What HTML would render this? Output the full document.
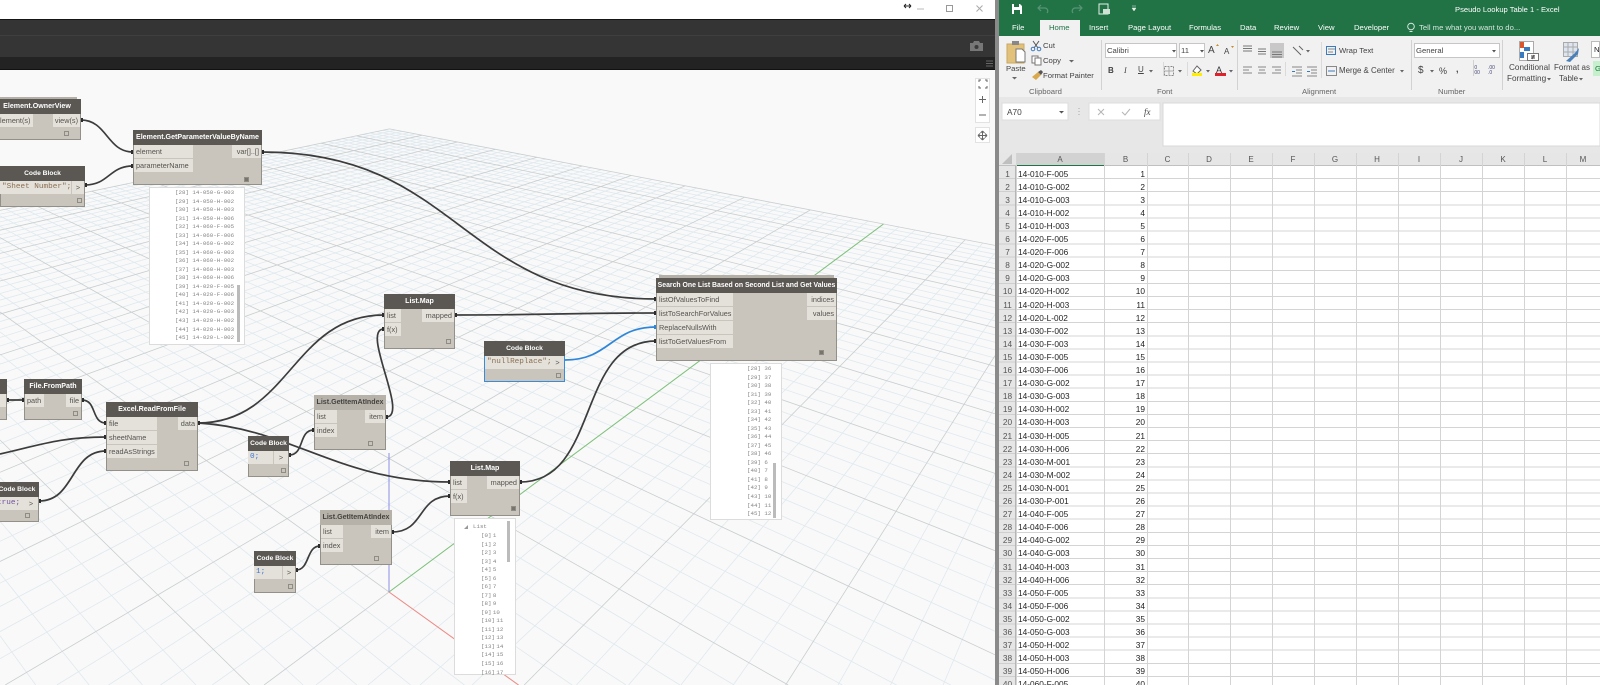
<!DOCTYPE html>
<html>
<head>
<meta charset="utf-8">
<style>
html,body{margin:0;padding:0;width:1600px;height:685px;overflow:hidden;background:#fff}
#root{position:absolute;left:0;top:0;width:1600px;height:685px;overflow:hidden;font-family:"Liberation Sans",sans-serif;filter:blur(.38px)}
.a{position:absolute}
.t{position:absolute;white-space:nowrap;line-height:1}
svg{position:absolute;left:0;top:0;overflow:hidden}
.n{position:absolute;background:#c9c5bd;outline:1px solid #93908a;outline-offset:-1px;font-size:7.3px;color:#55534f}
.h{position:absolute;left:0;right:0;top:0;height:15px;background:#5b5753;color:#fff;font-weight:bold;font-size:7.1px;line-height:15px;text-align:center;white-space:nowrap;overflow:hidden}
.h.lt{background:#b6b2aa;color:#45433f}
.h.cb{font-size:6.7px}
.l,.r{position:absolute;height:13px;line-height:13px;background:#e4e1da;white-space:nowrap}
.l{left:1px;padding-left:2px;box-sizing:border-box}
.r{right:1px;padding-right:2px;box-sizing:border-box;text-align:right}
.c{font-family:"Liberation Mono",monospace;font-size:7.7px;overflow:hidden}
.m{position:absolute;width:5px;height:5px;border:1px solid #8f8c85;box-sizing:border-box}
.m.f{background:#77746e}
.p{position:absolute;background:#fff;border:1px solid #dcdcdc;box-sizing:border-box}
pre{position:absolute;margin:0;font-family:"Liberation Mono",monospace;font-size:5.8px;line-height:8.53px;color:#868686}
.sb{position:absolute;background:#bbb;width:3px}
.xl{color:#444;font-size:7.7px}
.tab{color:#fff;font-size:7.7px;top:24px}
.rw{position:absolute;left:0;width:148px;height:13.1px;line-height:13.1px;font-size:8.3px;color:#222;overflow:hidden}
.rw i{position:absolute;left:0;top:1.5px;width:17px;text-align:center;font-style:normal;color:#555}
.rw b{position:absolute;left:19px;top:1.5px;font-weight:normal}
.rw u{position:absolute;left:105px;top:1.5px;width:43px;padding-right:2px;box-sizing:border-box;text-align:right;text-decoration:none}
.v{position:absolute;top:153px;width:1px;height:532px;background:#d4d4d4}
.ch{position:absolute;top:153px;height:13px;line-height:13px;font-size:8px;color:#555;text-align:center}
</style>
</head>
<body>
<div id="root">

<!-- Dynamo -->
<div class="a" style="left:0;top:0;width:995px;height:19px;background:#fff"></div>
<div class="a" style="left:0;top:19px;width:995px;height:1px;background:#151515"></div>
<div class="a" style="left:0;top:20px;width:995px;height:15px;background:#343434"></div>
<div class="a" style="left:0;top:35px;width:995px;height:1px;background:#3f3f3f"></div>
<div class="a" style="left:0;top:36px;width:995px;height:21px;background:#353535"></div>
<div class="a" style="left:0;top:57px;width:995px;height:12px;background:#232323"></div>
<div class="a" style="left:0;top:69px;width:995px;height:1px;background:#111"></div>
<div class="a" style="left:0;top:70px;width:995px;height:615px;background:#f9f9f9;overflow:hidden">
  <svg id="grid" width="995" height="615" viewBox="0 70 995 615" style="top:0;left:0"></svg>
</div>

<!-- window controls -->
<svg width="1600" height="685">
  <path d="M904 6H911M904 6l2-2M904 6l2 2M911 6l-2-2M911 6l-2 2" stroke="#222" stroke-width="1" fill="none"/>
  <path d="M917 9H924" stroke="#bbb" stroke-width="1"/>
  <rect x="946.500" y="5.500" width="6" height="6" fill="none" stroke="#999"/>
  <path d="M976.500 5.500l6 6M982.500 5.500l-6 6" stroke="#aaa" fill="none"/>
  <path d="M970 43h3l1-2h5l1 2h3v8h-13z" fill="#777"/>
  <circle cx="976.500" cy="47" r="2" fill="#3a3a3a"/>
  <path d="M986 61h7M986 63.500h7M986 66h7" stroke="#666" stroke-width="1"/>
  <!-- axes -->
  <path d="M389 453V592" stroke="#8d8de8" stroke-width="1"/>
  <path d="M389 592L883.500 224" stroke="#7ec27a" stroke-width="1" fill="none"/>
  <path d="M389 592L518.600 685" stroke="#f08a85" stroke-width="1" fill="none"/>
  <!-- wires -->
  <g fill="none" stroke="#3c3c3c" stroke-width="1.700">
    <path d="M81 120C107 120 107 152 133 152"/>
    <path d="M85 185C109 185 109 166 133 166"/>
    <path d="M262 152C460 152 460 299 656 299"/>
    <path d="M455 315C555 315 555 313 656 313"/>
    <path d="M520 482C600 482 576 341 656 341"/>
    <path d="M198 423C290 423 292 315 384 315"/>
    <path d="M198 423C290 428 340 482 450 482"/>
    <path d="M386 417C410 417 360 329 384 329"/>
    <path d="M289 455C305 455 298 430 314 430"/>
    <path d="M296 570C310 570 306 546 320 546"/>
    <path d="M392 532C425 532 417 496 450 496"/>
    <path d="M82 400C97 400 91 423 106 423"/>
    <path d="M7 400H24"/>
    <path d="M39 501C75 501 70 451 106 451"/>
    <path d="M0 454C40 445 60 437 106 437"/>
  </g>
  <path d="M565 360C610 360 611 327 656 327" fill="none" stroke="#2f86d8" stroke-width="1.700"/>
  <g fill="#2c2c2c">
    <rect x="81" y="118" width="2" height="4"/><rect x="131" y="150" width="2" height="4"/>
    <rect x="85" y="183" width="2" height="4"/><rect x="131" y="164" width="2" height="4"/>
    <rect x="262" y="150" width="2" height="4"/><rect x="654" y="297" width="2" height="4"/>
    <rect x="654" y="311" width="2" height="4"/><rect x="654" y="339" width="2" height="4"/>
    <rect x="455" y="313" width="2" height="4"/><rect x="382" y="313" width="2" height="4"/>
    <rect x="382" y="327" width="2" height="4"/><rect x="520" y="480" width="2" height="4"/>
    <rect x="448" y="480" width="2" height="4"/><rect x="448" y="494" width="2" height="4"/>
    <rect x="198" y="421" width="2" height="4"/><rect x="386" y="415" width="2" height="4"/>
    <rect x="312" y="428" width="2" height="4"/><rect x="289" y="453" width="2" height="4"/>
    <rect x="318" y="544" width="2" height="4"/><rect x="296" y="568" width="2" height="4"/>
    <rect x="392" y="530" width="2" height="4"/><rect x="82" y="398" width="2" height="4"/>
    <rect x="104" y="421" width="2" height="4"/><rect x="104" y="435" width="2" height="4"/>
    <rect x="104" y="449" width="2" height="4"/><rect x="39" y="499" width="2" height="4"/>
    <rect x="22" y="398" width="2" height="4"/><rect x="7" y="398" width="2" height="4"/>
  </g>
  <rect x="654" y="325" width="2" height="4" fill="#2f86d8"/>
</svg>

<!-- nodes -->
<div class="a" style="left:0;top:97px;width:77px;height:4px;background:#b4b0a8"></div>
<div class="n" style="left:-7px;top:99px;width:88px;height:41px">
  <div class="h">Element.OwnerView</div>
  <div class="l" style="top:15px;width:39px">element(s)</div>
  <div class="r" style="top:15px;width:27px">view(s)</div>
  <div class="m" style="left:71px;top:32px"></div>
</div>

<div class="n" style="left:0;top:166px;width:85px;height:41px">
  <div class="h cb">Code Block</div>
  <div class="l c" style="top:15px;width:71px;color:#8b6f52;left:0">"Sheet Number";</div>
  <div class="r" style="top:15px;width:12px;text-align:center;padding:0">&gt;</div>
  <div class="m" style="left:77px;top:32px"></div>
</div>

<div class="n" style="left:133px;top:130px;width:129px;height:55px">
  <div class="h">Element.GetParameterValueByName</div>
  <div class="l" style="top:15px;width:59px">element</div>
  <div class="l" style="top:29px;width:59px">parameterName</div>
  <div class="r" style="top:15px;width:29px">var[]..[]</div>
  <div class="m f" style="left:111px;top:47px"></div>
</div>

<div class="p" style="left:149px;top:187px;width:96px;height:158px">
  <pre style="left:25px;top:1px">[28] 14-050-G-003
[29] 14-050-H-002
[30] 14-050-H-003
[31] 14-050-H-006
[32] 14-060-F-005
[33] 14-060-F-006
[34] 14-060-G-002
[35] 14-060-G-003
[36] 14-060-H-002
[37] 14-060-H-003
[38] 14-060-H-006
[39] 14-020-F-005
[40] 14-020-F-006
[41] 14-020-G-002
[42] 14-020-G-003
[43] 14-020-H-002
[44] 14-020-H-003
[45] 14-020-L-002</pre>
  <div class="sb" style="left:87px;top:97px;height:57px"></div>
</div>

<div class="n" style="left:384px;top:294px;width:71px;height:55px">
  <div class="h">List.Map</div>
  <div class="l" style="top:15px;width:16px">list</div>
  <div class="l" style="top:29px;width:16px">f(x)</div>
  <div class="r" style="top:15px;width:32px">mapped</div>
  <div class="m" style="left:62px;top:45px"></div>
</div>

<div class="n" style="left:484px;top:341px;width:81px;height:41px;outline:1.5px solid #3a8bd8">
  <div class="h cb">Code Block</div>
  <div class="l c" style="top:15px;width:66px;color:#8b6f52">"nullReplace";</div>
  <div class="r" style="top:15px;width:13px;text-align:center;padding:0">&gt;</div>
  <div class="m" style="left:72px;top:32px"></div>
</div>

<div class="a" style="left:659px;top:275px;width:175px;height:4px;background:#b4b0a8"></div>
<div class="n" style="left:656px;top:278px;width:181px;height:83px">
  <div class="h" style="font-size:6.9px">Search One List Based on Second List and Get Values</div>
  <div class="l" style="top:15px;width:76px">listOfValuesToFind</div>
  <div class="l" style="top:29px;width:76px">listToSearchForValues</div>
  <div class="l" style="top:43px;width:76px">ReplaceNullsWith</div>
  <div class="l" style="top:57px;width:76px">listToGetValuesFrom</div>
  <div class="r" style="top:15px;width:29px">indices</div>
  <div class="r" style="top:29px;width:29px">values</div>
  <div class="m f" style="left:163px;top:72px"></div>
</div>

<div class="p" style="left:710px;top:363px;width:72px;height:157px">
  <pre style="left:36px;top:1px">[28] 36
[29] 37
[30] 38
[31] 39
[32] 40
[33] 41
[34] 42
[35] 43
[36] 44
[37] 45
[38] 46
[39] 6
[40] 7
[41] 8
[42] 9
[43] 10
[44] 11
[45] 12</pre>
  <div class="sb" style="left:62px;top:99px;height:55px"></div>
</div>

<div class="n" style="left:314px;top:395px;width:72px;height:55px">
  <div class="h lt">List.GetItemAtIndex</div>
  <div class="l" style="top:15px;width:22px">list</div>
  <div class="l" style="top:29px;width:22px">index</div>
  <div class="r" style="top:15px;width:20px">item</div>
  <div class="m" style="left:54px;top:46px"></div>
</div>

<div class="n" style="left:450px;top:461px;width:70px;height:55px">
  <div class="h">List.Map</div>
  <div class="l" style="top:15px;width:16px">list</div>
  <div class="l" style="top:29px;width:16px">f(x)</div>
  <div class="r" style="top:15px;width:32px">mapped</div>
  <div class="m f" style="left:61px;top:45px"></div>
</div>

<div class="n" style="left:320px;top:510px;width:72px;height:55px">
  <div class="h lt">List.GetItemAtIndex</div>
  <div class="l" style="top:15px;width:22px">list</div>
  <div class="l" style="top:29px;width:22px">index</div>
  <div class="r" style="top:15px;width:20px">item</div>
  <div class="m" style="left:54px;top:46px"></div>
</div>

<div class="p" style="left:454px;top:518px;width:62px;height:157px">
  <pre style="left:18px;top:4px">List</pre>
  <svg width="6" height="6" style="left:8px;top:5px"><path d="M1 5L5 5L5 1Z" fill="#999"/></svg>
  <pre style="left:26px;top:13px;word-spacing:-2px">[0] 1
[1] 2
[2] 3
[3] 4
[4] 5
[5] 6
[6] 7
[7] 8
[8] 9
[9] 10
[10] 11
[11] 12
[12] 13
[13] 14
[14] 15
[15] 16
[16] 17</pre>
  <div class="sb" style="left:52px;top:2px;height:41px"></div>
</div>

<div class="n" style="left:-10px;top:379px;width:17px;height:41px">
  <div class="h"></div>
  <div class="r" style="top:15px;width:14px"></div>
</div>

<div class="n" style="left:24px;top:379px;width:58px;height:41px">
  <div class="h">File.FromPath</div>
  <div class="l" style="top:15px;width:19px">path</div>
  <div class="r" style="top:15px;width:15px">file</div>
  <div class="m" style="left:49px;top:32px"></div>
</div>

<div class="n" style="left:106px;top:402px;width:92px;height:69px">
  <div class="h">Excel.ReadFromFile</div>
  <div class="l" style="top:15px;width:50px">file</div>
  <div class="l" style="top:29px;width:50px">sheetName</div>
  <div class="l" style="top:43px;width:50px">readAsStrings</div>
  <div class="r" style="top:15px;width:19px">data</div>
  <div class="m" style="left:78px;top:59px"></div>
</div>

<div class="n" style="left:248px;top:436px;width:41px;height:41px">
  <div class="h cb">Code Block</div>
  <div class="l c" style="top:15px;width:25px;color:#3f78d0;left:0;padding-left:2px">0;</div>
  <div class="r" style="top:15px;width:14px;text-align:center;padding:0">&gt;</div>
  <div class="m" style="left:33px;top:32px"></div>
</div>

<div class="n" style="left:-5px;top:482px;width:44px;height:40px">
  <div class="h cb">Code Block</div>
  <div class="l c" style="top:15px;width:29px;color:#6f519f;left:0;padding-left:2px">true;</div>
  <div class="r" style="top:15px;width:14px;text-align:center;padding:0">&gt;</div>
  <div class="m" style="left:30px;top:31px"></div>
</div>

<div class="n" style="left:254px;top:551px;width:42px;height:42px">
  <div class="h cb">Code Block</div>
  <div class="l c" style="top:15px;width:28px;color:#3f78d0;left:0;padding-left:2px">1;</div>
  <div class="r" style="top:15px;width:12px;text-align:center;padding:0">&gt;</div>
  <div class="m" style="left:34px;top:33px"></div>
</div>

<!-- canvas controls -->
<div class="a" style="left:975px;top:78px;width:15px;height:45px;background:#fff;border:1px solid #e2e2e2;box-sizing:border-box"></div>
<div class="a" style="left:975px;top:127px;width:15px;height:16px;background:#fff;border:1px solid #e2e2e2;box-sizing:border-box"></div>
<svg width="1600" height="685">
  <path d="M979 82v-2h2M985 80h2v2M987 86v2h-2M981 88h-2v-2" fill="none" stroke="#666"/>
  <path d="M979 99.500h7M982.500 96v7" stroke="#666" fill="none"/>
  <path d="M979 115h7" stroke="#666" fill="none"/>
  <path d="M978 135.500h9M982.500 131v9M978 135.500l2-2M978 135.500l2 2M987 135.500l-2-2M987 135.500l-2 2M982.500 131l-2 2M982.500 131l2 2M982.500 140l-2-2M982.500 140l2-2" stroke="#666" fill="none"/>
</svg>

<!-- Excel -->
<div class="a" style="left:995px;top:0;width:4px;height:685px;background:#8a8a8a"></div>
<div class="a" style="left:999px;top:0;width:601px;height:36px;background:#217346"></div>
<div class="a" style="left:999px;top:36px;width:601px;height:61px;background:#f1f1f1"></div>
<div class="a" style="left:999px;top:97px;width:601px;height:56px;background:#e7e7e7"></div>
<div class="a" style="left:1040px;top:20px;width:40px;height:17px;background:#f1f1f1"></div>

<span class="t" style="left:1455px;top:6px;color:#fff;font-size:7.6px">Pseudo Lookup Table 1 - Excel</span>
<span class="t tab" style="left:1012px">File</span>
<span class="t" style="left:1049px;top:24px;color:#217346;font-size:7.7px">Home</span>
<span class="t tab" style="left:1089px">Insert</span>
<span class="t tab" style="left:1128px">Page Layout</span>
<span class="t tab" style="left:1189px">Formulas</span>
<span class="t tab" style="left:1240px">Data</span>
<span class="t tab" style="left:1274px">Review</span>
<span class="t tab" style="left:1318px">View</span>
<span class="t tab" style="left:1354px">Developer</span>
<span class="t tab" style="left:1419px;color:#d5e6dc">Tell me what you want to do...</span>

<span class="t xl" style="left:1006px;top:65px">Paste</span>
<span class="t xl" style="left:1043px;top:42px">Cut</span>
<span class="t xl" style="left:1043px;top:57px">Copy</span>
<span class="t xl" style="left:1043px;top:72px">Format Painter</span>
<span class="t xl" style="left:1029px;top:88px;color:#666">Clipboard</span>
<span class="t xl" style="left:1157px;top:88px;color:#666">Font</span>
<span class="t xl" style="left:1302px;top:88px;color:#666">Alignment</span>
<span class="t xl" style="left:1438px;top:88px;color:#666">Number</span>

<div class="a" style="left:1105px;top:43px;width:72px;height:15px;background:#fff;border:1px solid #c6c6c6;box-sizing:border-box"></div>
<div class="a" style="left:1179px;top:43px;width:26px;height:15px;background:#fff;border:1px solid #c6c6c6;box-sizing:border-box"></div>
<span class="t xl" style="left:1107px;top:47px">Calibri</span>
<span class="t xl" style="left:1181px;top:47px">11</span>
<span class="t" style="left:1108px;top:66px;font:bold 8px 'Liberation Sans',sans-serif;color:#444">B</span>
<span class="t" style="left:1124px;top:66px;font:italic 8px 'Liberation Serif',serif;color:#444">I</span>
<span class="t" style="left:1138px;top:66px;font-size:8px;color:#444;text-decoration:underline">U</span>
<span class="t" style="left:1208px;top:46px;font-size:10px;color:#444">A</span>
<span class="t" style="left:1224px;top:48px;font-size:8px;color:#444">A</span>
<span class="t" style="left:1216px;top:66px;font-size:9px;color:#333">A</span>

<div class="a" style="left:1270px;top:43px;width:14px;height:15px;background:#c8c8c8"></div>
<span class="t xl" style="left:1339px;top:47px">Wrap Text</span>
<span class="t xl" style="left:1339px;top:67px;font-size:7.9px">Merge &amp; Center</span>
<div class="a" style="left:1414px;top:43px;width:86px;height:15px;background:#fff;border:1px solid #c6c6c6;box-sizing:border-box"></div>
<span class="t xl" style="left:1416px;top:47px">General</span>
<span class="t" style="left:1418px;top:66px;font-size:10px;color:#444">$</span>
<span class="t" style="left:1439px;top:67px;font-size:9px;color:#444">%</span>
<span class="t" style="left:1456px;top:65px;font-size:9px;font-weight:bold;color:#444">,</span>
<span class="t" style="left:1473px;top:66px;font-size:5px;color:#447;line-height:5px">.0<br>.00</span>
<span class="t" style="left:1488px;top:66px;font-size:5px;color:#447;line-height:5px">.00<br>.0</span>
<span class="t xl" style="left:1509px;top:64px;font-size:8.2px">Conditional</span>
<span class="t xl" style="left:1507px;top:75px;font-size:8.2px">Formatting</span>
<span class="t xl" style="left:1554px;top:64px;font-size:8px">Format as</span>
<span class="t xl" style="left:1559px;top:75px;font-size:8px">Table</span>
<div class="a" style="left:1591px;top:41px;width:9px;height:17px;background:#fff;border:1px solid #bbb;box-sizing:border-box"></div>
<span class="t xl" style="left:1594px;top:46px;color:#222">N</span>
<div class="a" style="left:1593px;top:61px;width:7px;height:15px;background:#c6efce"></div>
<span class="t xl" style="left:1595px;top:65px;color:#1e7a3c">G</span>

<!-- excel icons -->
<svg width="1600" height="685">
  <path d="M1012 4h8l2 2v8h-10z" fill="#fff"/><rect x="1014" y="4" width="5" height="3" fill="#217346"/><rect x="1014" y="10" width="6" height="4" fill="#217346"/>
  <path d="M1041 5l-3 3 3 3M1038 8h7a3 3 0 0 1 2 5" fill="none" stroke="#5a9377" stroke-width="1.200"/>
  <path d="M1079 5l3 3-3 3M1082 8h-7a3 3 0 0 0-2 5" fill="none" stroke="#5a9377" stroke-width="1.200"/>
  <rect x="1099" y="4" width="9" height="10" fill="none" stroke="#e8f0ea"/><rect x="1103" y="9" width="7" height="5" fill="#cfe0d5"/>
  <path d="M1132 6h4M1132 8h4l-2 3z" fill="#e8f0ea" stroke="#e8f0ea" stroke-width=".500"/>
  <circle cx="1411" cy="26.500" r="3.300" fill="none" stroke="#d5e6dc"/><path d="M1409.500 31.500h3" fill="none" stroke="#d5e6dc"/>

  <rect x="1007" y="44" width="17" height="19" fill="#e2c27a" stroke="#c9a864"/>
  <rect x="1012" y="41" width="7" height="4" fill="#888"/>
  <path d="M1016 49h6l3 3v10h-9z" fill="#fff" stroke="#777"/>
  <path d="M1012 77h5l-2.500 2.500z" fill="#666"/>
  <path d="M1033 41l5 7M1039 41l-5 7" stroke="#555" fill="none"/><circle cx="1033" cy="49" r="1.800" fill="none" stroke="#3a7bbf"/><circle cx="1039" cy="49" r="1.800" fill="none" stroke="#3a7bbf"/>
  <rect x="1032" y="56" width="6" height="7" fill="#fff" stroke="#777"/><rect x="1035" y="58" width="6" height="7" fill="#fff" stroke="#777"/>
  <path d="M1069 60h5l-2.500 2.500z" fill="#666"/>
  <path d="M1032 77l6-5 3 3-5 5z" fill="#d9a94c"/><path d="M1038 72l3-2 2 2-2 3z" fill="#555"/>

  <path d="M1172 50h4l-2 2.500zM1200 50h4l-2 2.500z" fill="#555"/>
  <path d="M1149 70h4l-2 2.500zM1178 70h4l-2 2.500zM1206 70h4l-2 2.500zM1229 70h4l-2 2.500z" fill="#666"/>
  <path d="M1216 46l1.500-2 1.500 2zM1231 46l1.500 2 1.500-2z" fill="#c88a2a"/>
  <rect x="1164.500" y="66.500" width="9" height="9" fill="none" stroke="#888" stroke-dasharray="2 1"/><path d="M1169 66v10M1164 71h10" stroke="#aaa"/>
  <path d="M1193 71l4-5 4 4-4 4z" fill="#fff" stroke="#666"/><rect x="1192" y="73" width="10" height="3" fill="#ffee00"/>
  <rect x="1215" y="73" width="11" height="3" fill="#e0202a"/>
  <path d="M1101.500 40v50M1237.500 40v50M1411.500 40v50M1502.500 40v50M1473.500 60v16" stroke="#d2d2d2" fill="none"/>
  <path d="M1163.500 62v14M1187.500 62v14M1321.500 42v36M1285.500 62v14" stroke="#dadada" fill="none"/>
  <path d="M1243 46h9M1243 48.500h9M1243 51h9M1258 49h8M1258 51.500h8M1258 54h8M1272 52h10M1272 54.500h10M1272 57h10" stroke="#777" fill="none"/>
  <path d="M1243 67h9M1243 70h6M1243 73h9M1258 67h8M1259 70h6M1258 73h8M1272 67h9M1275 70h6M1272 73h9" stroke="#888" fill="none"/>
  <path d="M1293 47l8 8M1299 46l4 4" stroke="#666" fill="none"/><path d="M1306 50h4l-2 2.500z" fill="#666"/>
  <path d="M1292 67h10M1296 70h6M1296 73h6M1292 76h10M1307 67h10M1311 70h6M1311 73h6M1307 76h10" stroke="#888" fill="none"/>
  <path d="M1292 71.500h3M1307 71.500h3" stroke="#3a7bbf"/>
  <rect x="1326.500" y="46.500" width="9" height="8" fill="none" stroke="#3a7bbf"/><path d="M1328 49h7M1328 52h5" stroke="#888"/>
  <rect x="1326.500" y="66.500" width="10" height="9" fill="none" stroke="#888"/><path d="M1328 71h7" stroke="#3a7bbf"/>
  <path d="M1400 70h4l-2 2.500zM1430 70h4l-2 2.500z" fill="#666"/>
  <path d="M1492 50h4l-2 2.500z" fill="#555"/>
  <path d="M1547 78h4l-2 2.500zM1579 78h4l-2 2.500z" fill="#666"/>
  <rect x="1519.500" y="41.500" width="14" height="19" fill="#fff" stroke="#aaa"/>
  <rect x="1520" y="42" width="4" height="6" fill="#d9572b"/><rect x="1524" y="47" width="6" height="4" fill="#3a7bbf"/><rect x="1520" y="52" width="4" height="6" fill="#3a7bbf"/>
  <rect x="1527.500" y="53.500" width="11" height="7" fill="#fff" stroke="#777"/><path d="M1531 56h4M1531 58h4M1534 55l-2 4" stroke="#444" fill="none"/>
  <rect x="1563.500" y="42.500" width="14" height="14" fill="#dde6f0" stroke="#aaa"/><path d="M1568 43v13M1573 43v13M1564 47h13M1564 52h13" stroke="#aaa"/>
  <path d="M1566 61l9-8 4-5-1 6-8 8z" fill="#4a7fb8"/>
  <rect x="1002" y="103" width="66" height="17" fill="#fff" stroke="#dcdcdc"/>
  <rect x="1089" y="103" width="71" height="17" fill="#fff" stroke="#dcdcdc"/>
  <rect x="1163" y="103" width="437" height="43" fill="#fff" stroke="#d8d8d8"/>
  <path d="M1059 111h5l-2.500 2.500z" fill="#555"/>
  <path d="M1079 108v1M1079 111v1M1079 114v1" stroke="#aaa"/>
  <path d="M1098 109l6 6M1104 109l-6 6" stroke="#b5b5b5" fill="none"/>
  <path d="M1122 112l3 3 5-6" stroke="#b5b5b5" fill="none"/>
</svg>
<span class="t" style="left:1007px;top:108px;font-size:8.300px;color:#444">A70</span>
<span class="t" style="left:1144px;top:107px;font:italic 9px 'Liberation Serif',serif;color:#444">fx</span>

<!-- sheet -->
<div class="a" style="left:999px;top:166px;width:601px;height:519px;background:#fff repeating-linear-gradient(to bottom,transparent 0,transparent 12.1px,#d4d4d4 12.1px,#d4d4d4 13.1px)"></div>
<div class="a" style="left:999px;top:166px;width:17px;height:519px;background:#e6e6e6 repeating-linear-gradient(to bottom,transparent 0,transparent 12.1px,#cfcfcf 12.1px,#cfcfcf 13.1px);border-right:1px solid #b5b5b5;box-sizing:border-box"></div>
<div class="a" style="left:999px;top:153px;width:601px;height:13px;background:#e6e6e6;border-bottom:1px solid #c0c0c0;box-sizing:border-box"></div>
<div class="a" style="left:1016px;top:153px;width:88px;height:13px;background:#d2d2d2;border-bottom:1px solid #217346;box-sizing:border-box"></div>
<svg width="1600" height="685"><path d="M1012 154v10h-10z" fill="#bfbfbf"/></svg>
<div class="v" style="left:1016px"></div><div class="v" style="left:1104px"></div><div class="v" style="left:1147px"></div><div class="v" style="left:1188px"></div><div class="v" style="left:1230px"></div><div class="v" style="left:1272px"></div><div class="v" style="left:1314px"></div><div class="v" style="left:1356px"></div><div class="v" style="left:1398px"></div><div class="v" style="left:1440px"></div><div class="v" style="left:1482px"></div><div class="v" style="left:1524px"></div><div class="v" style="left:1566px"></div>
<div class="ch" style="left:1016px;width:88px">A</div><div class="ch" style="left:1104px;width:43px">B</div><div class="ch" style="left:1147px;width:41px">C</div><div class="ch" style="left:1188px;width:42px">D</div><div class="ch" style="left:1230px;width:42px">E</div><div class="ch" style="left:1272px;width:42px">F</div><div class="ch" style="left:1314px;width:42px">G</div><div class="ch" style="left:1356px;width:42px">H</div><div class="ch" style="left:1398px;width:42px">I</div><div class="ch" style="left:1440px;width:42px">J</div><div class="ch" style="left:1482px;width:42px">K</div><div class="ch" style="left:1524px;width:42px">L</div><div class="ch" style="left:1566px;width:34px">M</div>

<div class="a" style="left:999px;top:166px;width:150px;height:519px;overflow:hidden">
<div class="rw" style="top:0"><i>1</i><b>14-010-F-005</b><u>1</u></div>
<div class="rw" style="top:13.1px"><i>2</i><b>14-010-G-002</b><u>2</u></div>
<div class="rw" style="top:26.2px"><i>3</i><b>14-010-G-003</b><u>3</u></div>
<div class="rw" style="top:39.3px"><i>4</i><b>14-010-H-002</b><u>4</u></div>
<div class="rw" style="top:52.4px"><i>5</i><b>14-010-H-003</b><u>5</u></div>
<div class="rw" style="top:65.5px"><i>6</i><b>14-020-F-005</b><u>6</u></div>
<div class="rw" style="top:78.6px"><i>7</i><b>14-020-F-006</b><u>7</u></div>
<div class="rw" style="top:91.7px"><i>8</i><b>14-020-G-002</b><u>8</u></div>
<div class="rw" style="top:104.8px"><i>9</i><b>14-020-G-003</b><u>9</u></div>
<div class="rw" style="top:117.9px"><i>10</i><b>14-020-H-002</b><u>10</u></div>
<div class="rw" style="top:131px"><i>11</i><b>14-020-H-003</b><u>11</u></div>
<div class="rw" style="top:144.1px"><i>12</i><b>14-020-L-002</b><u>12</u></div>
<div class="rw" style="top:157.2px"><i>13</i><b>14-030-F-002</b><u>13</u></div>
<div class="rw" style="top:170.3px"><i>14</i><b>14-030-F-003</b><u>14</u></div>
<div class="rw" style="top:183.4px"><i>15</i><b>14-030-F-005</b><u>15</u></div>
<div class="rw" style="top:196.5px"><i>16</i><b>14-030-F-006</b><u>16</u></div>
<div class="rw" style="top:209.6px"><i>17</i><b>14-030-G-002</b><u>17</u></div>
<div class="rw" style="top:222.7px"><i>18</i><b>14-030-G-003</b><u>18</u></div>
<div class="rw" style="top:235.8px"><i>19</i><b>14-030-H-002</b><u>19</u></div>
<div class="rw" style="top:248.9px"><i>20</i><b>14-030-H-003</b><u>20</u></div>
<div class="rw" style="top:262px"><i>21</i><b>14-030-H-005</b><u>21</u></div>
<div class="rw" style="top:275.1px"><i>22</i><b>14-030-H-006</b><u>22</u></div>
<div class="rw" style="top:288.2px"><i>23</i><b>14-030-M-001</b><u>23</u></div>
<div class="rw" style="top:301.3px"><i>24</i><b>14-030-M-002</b><u>24</u></div>
<div class="rw" style="top:314.4px"><i>25</i><b>14-030-N-001</b><u>25</u></div>
<div class="rw" style="top:327.5px"><i>26</i><b>14-030-P-001</b><u>26</u></div>
<div class="rw" style="top:340.6px"><i>27</i><b>14-040-F-005</b><u>27</u></div>
<div class="rw" style="top:353.7px"><i>28</i><b>14-040-F-006</b><u>28</u></div>
<div class="rw" style="top:366.8px"><i>29</i><b>14-040-G-002</b><u>29</u></div>
<div class="rw" style="top:379.9px"><i>30</i><b>14-040-G-003</b><u>30</u></div>
<div class="rw" style="top:393px"><i>31</i><b>14-040-H-003</b><u>31</u></div>
<div class="rw" style="top:406.1px"><i>32</i><b>14-040-H-006</b><u>32</u></div>
<div class="rw" style="top:419.2px"><i>33</i><b>14-050-F-005</b><u>33</u></div>
<div class="rw" style="top:432.3px"><i>34</i><b>14-050-F-006</b><u>34</u></div>
<div class="rw" style="top:445.4px"><i>35</i><b>14-050-G-002</b><u>35</u></div>
<div class="rw" style="top:458.5px"><i>36</i><b>14-050-G-003</b><u>36</u></div>
<div class="rw" style="top:471.6px"><i>37</i><b>14-050-H-002</b><u>37</u></div>
<div class="rw" style="top:484.7px"><i>38</i><b>14-050-H-003</b><u>38</u></div>
<div class="rw" style="top:497.8px"><i>39</i><b>14-050-H-006</b><u>39</u></div>
<div class="rw" style="top:510.9px;height:8.1px"><i>40</i><b>14-060-F-005</b><u>40</u></div>
</div>
</div>

<script>
(function(){
  var g=document.getElementById('grid'),o='';
  var X0=0,X1=995,Y0=70,Y1=685;
  function p(u,v){var w=1+1.334*u+1.313*v;return [(389+1673*u-642*v)/w,(592-69.4*u-52.5*v)/w];}
  function lim(k){return Math.max(-1,(0.12-1-1.313*k)/1.334);}
  function lim2(k){return Math.max(-1,(0.12-1-1.334*k)/1.313);}
  function add(a,b,m){
    var dx=b[0]-a[0],dy=b[1]-a[1],t0=0,t1=1;
    var ps=[-dx,dx,-dy,dy],qs=[a[0]-X0,X1-a[0],a[1]-Y0,Y1-a[1]];
    for(var n=0;n<4;n++){
      if(ps[n]===0){if(qs[n]<0)return;continue;}
      var r=qs[n]/ps[n];
      if(ps[n]<0){if(r>t1)return;if(r>t0)t0=r;}
      else{if(r<t0)return;if(r<t1)t1=r;}
    }
    o+='<line x1="'+(a[0]+t0*dx).toFixed(1)+'" y1="'+(a[1]+t0*dy).toFixed(1)+'" x2="'+(a[0]+t1*dx).toFixed(1)+'" y2="'+(a[1]+t1*dy).toFixed(1)+'" stroke="'+(m?'#c8ced0':'#dfe9ef')+'" stroke-width=".8"/>';
  }
  for(var pass=0;pass<2;pass++){
    for(var i=-50;i<=50;i++){
      var m=(i%5===0);
      if(m!==(pass===1))continue;
      var k=i/50;
      add(p(1,k),p(lim(k),k),m);
      add(p(k,1),p(k,lim2(k)),m);
    }
  }
  g.innerHTML=o;
})();
</script>
</body>
</html>
